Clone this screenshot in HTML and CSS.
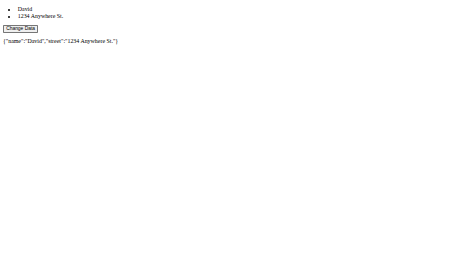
FILE: index.html
```html
<!DOCTYPE html>
<html lang="en">
<head>
    <meta charset="UTF-8">
    <title>Data</title>
    <link rel="stylesheet" href="styles.css">
</head>
<body>
    <ul class="info">
        <li>David</li>
        <li>1234 Anywhere St.</li>
    </ul>
    <button class="change-btn">Change Data</button>
    <p class="json">{"name":"David","street":"1234 Anywhere St."}</p>
</body>
</html>
```

FILE: styles.css
```css
body {
    margin: 2.96px;
    font-family: "Liberation Serif", serif;
    font-size: 5.92px;
    line-height: 7px;
    color: #000;
    background: #fff;
}
.info {
    margin: 3px 0 5.4px;
    padding-left: 14.8px;
}
.change-btn {
    display: block;
    height: 8px;
    font-family: "Liberation Sans", Arial, sans-serif;
    font-size: 4.93px;
    line-height: 6px;
    padding: 0 2.2px;
    border: 0.74px solid #767676;
    border-radius: 0.74px;
    background: #efefef;
    color: #000;
}
.json {
    margin: 5px 0;
}
```
